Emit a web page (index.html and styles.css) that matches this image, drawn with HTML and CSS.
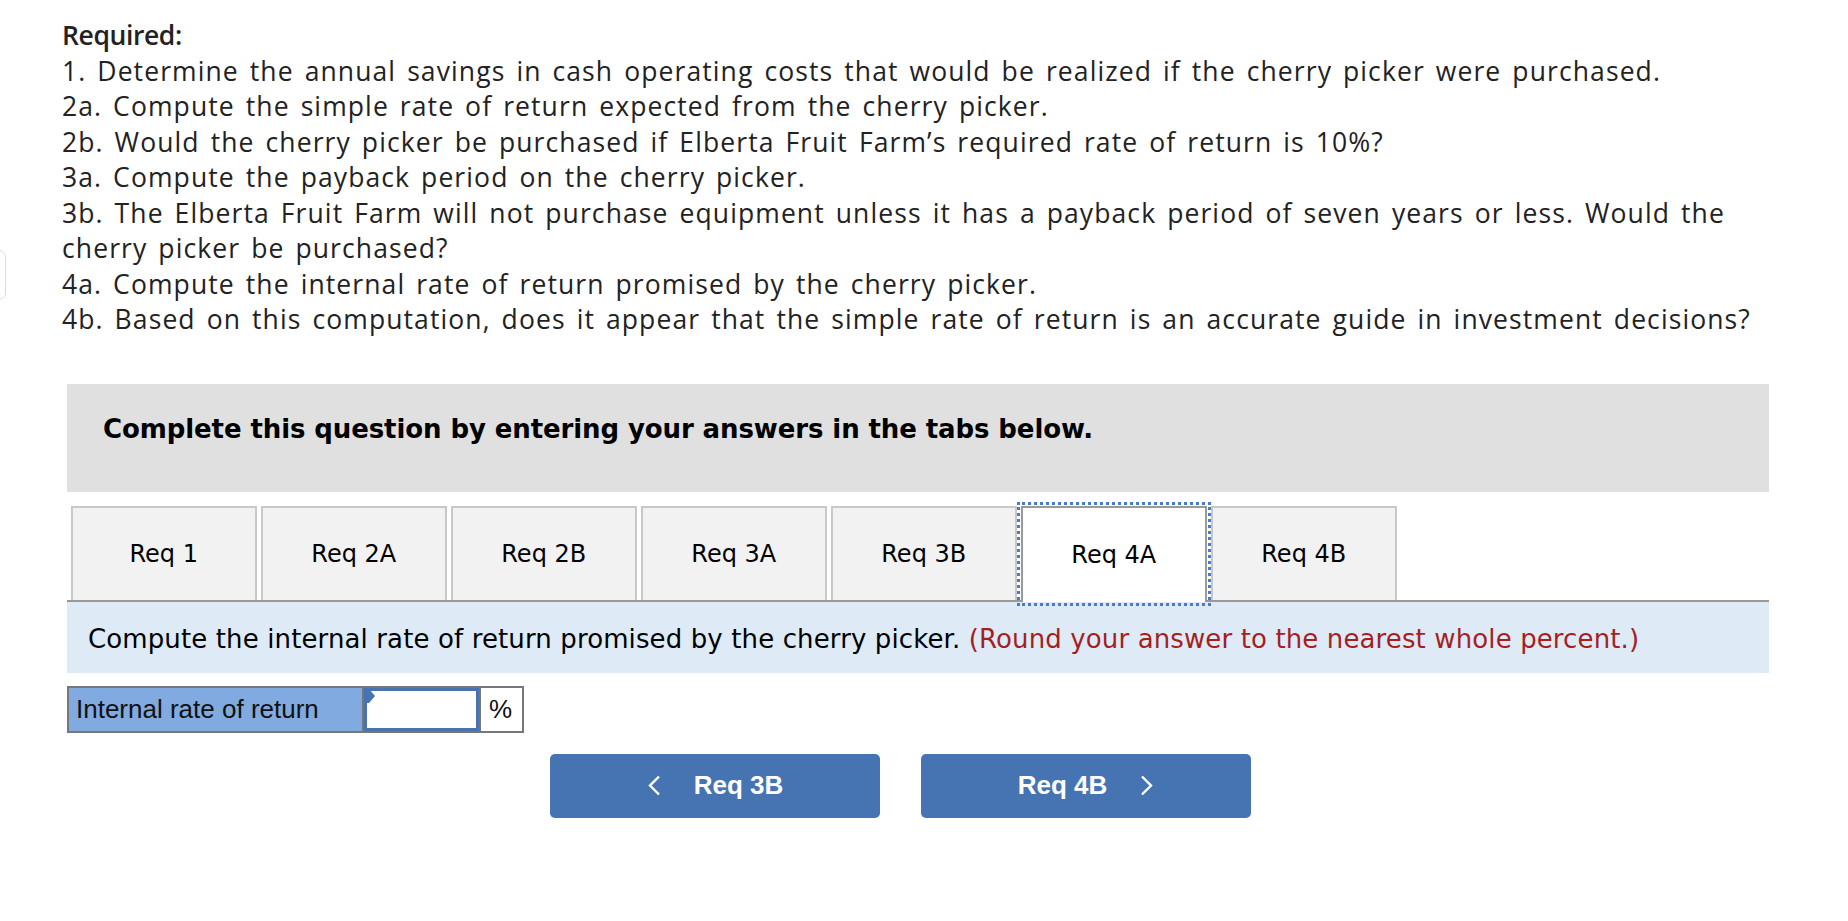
FILE: index.html
```html
<!DOCTYPE html>
<html lang="en">
<head>
<meta charset="utf-8">
<title>Required</title>
<link rel="stylesheet" href="styles.css">
</head>
<body>
<div class="edge-tab"></div>
<div class="required">
  <div class="req-line req-title">Required:</div>
  <div class="req-line">1. Determine the annual savings in cash operating costs that would be realized if the cherry picker were purchased.</div>
  <div class="req-line">2a. Compute the simple rate of return expected from the cherry picker.</div>
  <div class="req-line">2b. Would the cherry picker be purchased if Elberta Fruit Farm’s required rate of return is 10%?</div>
  <div class="req-line">3a. Compute the payback period on the cherry picker.</div>
  <div class="req-line">3b. The Elberta Fruit Farm will not purchase equipment unless it has a payback period of seven years or less. Would the<br>cherry picker be purchased?</div>
  <div class="req-line">4a. Compute the internal rate of return promised by the cherry picker.</div>
  <div class="req-line">4b. Based on this computation, does it appear that the simple rate of return is an accurate guide in investment decisions?</div>
</div>

<div class="panel">
  <div class="instructions">Complete this question by entering your answers in the tabs below.</div>

  <div class="tabs">
    <div class="tab">Req 1</div>
    <div class="tab">Req 2A</div>
    <div class="tab">Req 2B</div>
    <div class="tab">Req 3A</div>
    <div class="tab">Req 3B</div>
    <div class="tab tab-active">Req 4A</div>
    <div class="tab">Req 4B</div>
  </div>

  <div class="prompt">Compute the internal rate of return promised by the cherry picker. <span class="hint">(Round your answer to the nearest whole percent.)</span></div>

  <div class="answer-row">
    <div class="answer-label">Internal rate of return</div>
    <div class="answer-cell">
      <svg class="flag" width="12" height="15" viewBox="0 0 12 15"><polygon points="0,0 5,0 11,7 5,14 0,14" fill="#4674b2"/></svg>
      <div class="answer-input"></div>
    </div>
    <div class="answer-unit">%</div>
  </div>

  <div class="nav">
    <div class="nav-btn">
      <svg class="chev" width="14" height="21" viewBox="0 0 14 21"><polyline points="12,1.5 3,10.5 12,19.5" fill="none" stroke="#fff" stroke-width="2.4"/></svg>
      <span>Req 3B</span>
    </div>
    <div class="nav-btn">
      <span>Req 4B</span>
      <svg class="chev" width="14" height="21" viewBox="0 0 14 21"><polyline points="2,1.5 11,10.5 2,19.5" fill="none" stroke="#fff" stroke-width="2.4"/></svg>
    </div>
  </div>
</div>
</body>
</html>
```

FILE: styles.css
```css
html, body {
  margin: 0;
  padding: 0;
  background: #ffffff;
}

body {
  position: relative;
  width: 1848px;
  min-height: 921px;
  overflow: hidden;
}

.edge-tab {
  position: absolute;
  left: -20px;
  top: 250px;
  width: 24px;
  height: 48px;
  border: 1px solid #dcdcdc;
  border-radius: 7px;
}

.required {
  padding: 18px 0 0 62px;
  font-family: "Open Sans", "Liberation Sans", sans-serif;
  font-size: 26.5px;
  letter-spacing: 1.1px;
  word-spacing: 3px;
  color: #222222;
}

.req-line {
  height: 35.5px;
  line-height: 35.5px;
}

.req-line:nth-child(6) {
  height: 71px;
}

.req-title {
  font-weight: 600;
  letter-spacing: -0.4px;
}

.panel {
  margin: 46px 0 0 67px;
  width: 1702px;
}

.instructions {
  box-sizing: border-box;
  height: 108px;
  padding: 30px 0 0 36px;
  background: #e0e0e0;
  font-family: "DejaVu Sans", Verdana, sans-serif;
  font-weight: 700;
  font-size: 26px;
  letter-spacing: -0.1px;
  color: #000000;
}

.tabs {
  display: flex;
  margin-top: 14px;
  height: 94px;
  border-bottom: 2px solid #999999;
}

.tab {
  box-sizing: border-box;
  width: 185.5px;
  height: 94px;
  margin-left: 4.5px;
  display: flex;
  align-items: center;
  justify-content: center;
  background: #f2f2f2;
  border: 2px solid #c8c8c8;
  border-bottom: none;
  font-family: "DejaVu Sans", Verdana, sans-serif;
  font-size: 24px;
  color: #000000;
}

.tab:first-child {
  margin-left: 4px;
}

.tab-active {
  background: #ffffff;
  border-color: #9a9a9a;
  outline: 3px dotted #4a7cc7;
  outline-offset: 1px;
  height: 96px;
  margin-bottom: -2px;
}

.prompt {
  box-sizing: border-box;
  height: 71px;
  padding: 22px 0 0 21px;
  background: #deebf7;
  font-family: "DejaVu Sans", Verdana, sans-serif;
  font-size: 26px;
  letter-spacing: 0.12px;
  color: #000000;
}

.hint {
  color: #a61e1e;
}

.answer-row {
  display: flex;
  margin-top: 13px;
  width: 457px;
  height: 47px;
  box-sizing: border-box;
  border: 2px solid #777777;
  font-family: "Liberation Sans", Arial, sans-serif;
  font-size: 26px;
  color: #111111;
}

.answer-label {
  width: 295px;
  box-sizing: border-box;
  padding-left: 7px;
  display: flex;
  align-items: center;
  background: #80aae0;
  border-right: 2px solid #777777;
}

.answer-cell {
  position: relative;
  width: 115px;
  background: #ffffff;
}

.answer-input {
  box-sizing: border-box;
  width: 100%;
  height: 100%;
  border: 3px solid #4a72b0;
}

.flag {
  position: absolute;
  left: 0;
  top: 1px;
}

.answer-unit {
  flex: 1;
  box-sizing: border-box;
  padding-left: 8px;
  display: flex;
  align-items: center;
  border-left: 2px solid #777777;
  background: #ffffff;
}

.nav {
  display: flex;
  gap: 41px;
  margin-top: 21px;
  padding-left: 483px;
}

.nav-btn {
  width: 330px;
  height: 64px;
  border-radius: 5px;
  background: #4674b2;
  display: flex;
  align-items: center;
  justify-content: center;
  gap: 33px;
  font-family: "Liberation Sans", Arial, sans-serif;
  font-weight: 700;
  font-size: 26px;
  color: #ffffff;
}

.chev {
  display: block;
}
```
